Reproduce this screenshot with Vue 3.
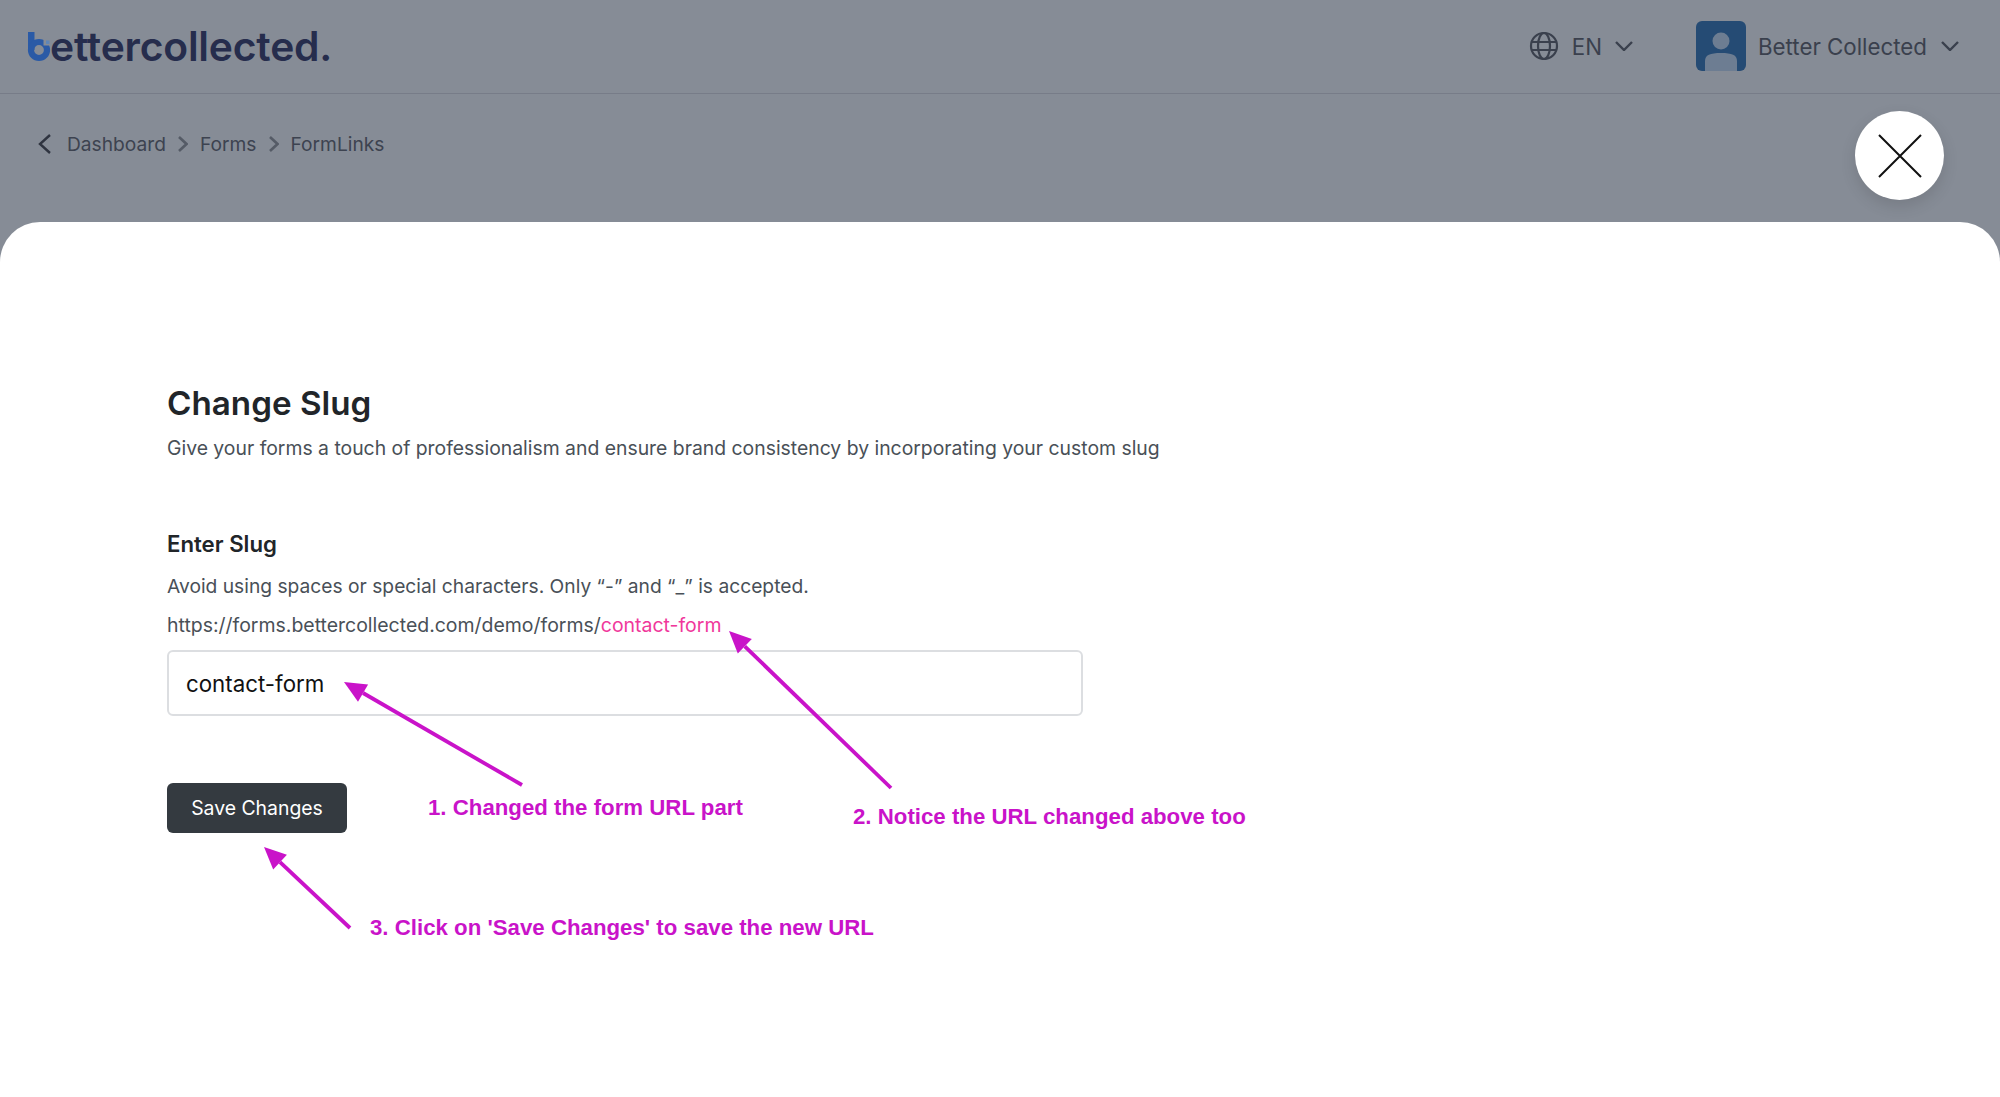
<template>
  <div class="page">
    <header class="topbar">
      <div class="logo">
        <svg class="logo-mark" width="24" height="30" viewBox="0 0 24 30" aria-hidden="true">
          <rect x="1" y="0" width="6.500" height="18" fill="#2a5aa6" />
          <circle cx="12" cy="18" r="8" fill="none" stroke="#2a5aa6" stroke-width="6.200" />
          <rect x="16.500" y="6" width="7.500" height="7.500" fill="#868c96" />
          <rect x="19" y="8.500" width="3.500" height="3.500" fill="#5f86b8" />
        </svg>
        <span class="logo-text">ettercollected.</span>
      </div>
      <div class="top-actions">
        <div class="lang">
          <svg width="30" height="30" viewBox="0 0 30 30" fill="none" stroke="#3a404d" stroke-width="2.200">
            <circle cx="15" cy="15" r="13" />
            <ellipse cx="15" cy="15" rx="6" ry="13" />
            <path d="M2 11H28M2 19H28" />
          </svg>
          <span>EN</span>
          <svg class="chev" width="18" height="10" viewBox="0 0 18 10"><path d="M1 1L9 9L17 1" /></svg>
        </div>
        <div class="user">
          <svg class="avatar" width="50" height="50" viewBox="0 0 50 50">
            <rect width="50" height="50" rx="6" fill="#254b74" />
            <circle cx="25" cy="20" r="8.500" fill="#6d7d92" />
            <path d="M9 50V40C9 34 14 32 25 32S41 34 41 40V50Z" fill="#6d7d92" />
          </svg>
          <span>Better Collected</span>
          <svg class="chev" width="18" height="10" viewBox="0 0 18 10"><path d="M1 1L9 9L17 1" /></svg>
        </div>
      </div>
    </header>

    <nav class="crumbs">
      <svg class="back" width="13" height="20" viewBox="0 0 13 20"><path d="M12 1L2 10L12 19" /></svg>
      <span>Dashboard</span>
      <svg class="sep" width="10" height="16" viewBox="0 0 10 16"><path d="M1 1L8.500 8L1 15" /></svg>
      <span>Forms</span>
      <svg class="sep" width="10" height="16" viewBox="0 0 10 16"><path d="M1 1L8.500 8L1 15" /></svg>
      <span>FormLinks</span>
    </nav>

    <main class="sheet">
      <h1>Change Slug</h1>
      <p class="sub">Give your forms a touch of professionalism and ensure brand consistency by incorporating your custom slug</p>
      <h2>Enter Slug</h2>
      <p class="hint">Avoid using spaces or special characters. Only “-” and “_” is accepted.</p>
      <p class="url">https://forms.bettercollected.com/demo/forms/<span>contact-form</span></p>
      <div class="field">contact-form</div>
      <button class="save" type="button">Save Changes</button>
    </main>

    <button class="close" type="button" aria-label="Close">
      <svg width="44" height="44" viewBox="0 0 44 44"><path d="M1 1L43 43M43 1L1 43" /></svg>
    </button>

    <svg class="arrows" width="2000" height="1097" viewBox="0 0 2000 1097" aria-hidden="true">
      <g v-for="a in arrows" :key="a.id">
        <line :x1="a.x1" :y1="a.y1" :x2="a.sx" :y2="a.sy" />
        <polygon :points="a.head" />
      </g>
    </svg>
    <span class="note n1">1. Changed the form URL part</span>
    <span class="note n2">2. Notice the URL changed above too</span>
    <span class="note n3">3. Click on 'Save Changes' to save the new URL</span>
  </div>
</template>

<script setup>
const raw = [
  { id: 1, x1: 522, y1: 785, x2: 344, y2: 682 },
  { id: 2, x1: 891, y1: 788, x2: 729, y2: 631 },
  { id: 3, x1: 350, y1: 928, x2: 264, y2: 847 }
]
const arrows = raw.map((a) => {
  const dx = a.x1 - a.x2
  const dy = a.y1 - a.y2
  const len = Math.hypot(dx, dy)
  const ux = dx / len
  const uy = dy / len
  const size = 22
  const half = 10
  const bx = a.x2 + ux * size
  const by = a.y2 + uy * size
  const head = [
    [a.x2, a.y2],
    [bx - uy * half, by + ux * half],
    [bx + uy * half, by - ux * half]
  ]
    .map((p) => p.map((n) => n.toFixed(1)).join(','))
    .join(' ')
  return { ...a, sx: bx, sy: by, head }
})
</script>

<style>
html, body { margin: 0; background: #868c96; }
</style>

<style scoped>
.page {
  position: relative;
  width: 2000px;
  height: 1097px;
  overflow: hidden;
  background: #868c96;
  font-family: Inter, "Liberation Sans", sans-serif;
  color: #3a404d;
}
.topbar {
  box-sizing: border-box;
  height: 94px;
  display: flex;
  align-items: center;
  justify-content: space-between;
  padding: 0 41px 0 27px;
  border-bottom: 1px solid #777c88;
}
.logo { display: flex; align-items: flex-end; height: 32px; margin-bottom: 2px; }
.logo-mark { display: block; }
.logo-text {
  font-size: 40.8px;
  font-weight: 600;
  line-height: 32px;
  letter-spacing: -0.2px;
  color: #262d4d;
  margin-left: -1px;
}
.top-actions { display: flex; align-items: center; gap: 63px; margin-bottom: 1px; }
.lang, .user { display: flex; align-items: center; font-size: 22.3px; }
.lang span { margin: 0 13px 0 13px; }
.user span { margin: 0 14px 0 12px; }
.chev path { fill: none; stroke: #3a404d; stroke-width: 2.4; }
.avatar { display: block; }
.crumbs {
  height: 46px;
  margin-top: 27px;
  padding-left: 38px;
  display: flex;
  align-items: center;
  font-size: 19.2px;
  color: #3d4350;
}
.back { margin-right: 16px; }
.back path { fill: none; stroke: #2f3440; stroke-width: 2.4; }
.sep { margin: 0 12px; }
.sep path { fill: none; stroke: #555b66; stroke-width: 2.6; }
.sheet {
  box-sizing: border-box;
  height: 875px;
  margin-top: 55px;
  padding: 157px 0 0 167px;
  background: #fff;
  border-radius: 40px 40px 0 0;
  color: #212529;
}
h1 {
  margin: 0;
  font-size: 33.2px;
  font-weight: 600;
  line-height: 48px;
  color: #212529;
}
.sub {
  margin: 7px 0 0;
  font-size: 19.37px;
  line-height: 28px;
  color: #495057;
}
h2 {
  margin: 66px 0 0;
  font-size: 22.2px;
  font-weight: 600;
  line-height: 32px;
  color: #212529;
}
.hint {
  margin: 12px 0 0;
  font-size: 19.23px;
  line-height: 28px;
  color: #495057;
}
.url {
  margin: 11px 0 0;
  font-size: 19.47px;
  line-height: 28px;
  color: #495057;
}
.url span { color: #f0389b; }
.field {
  box-sizing: border-box;
  width: 916px;
  height: 66px;
  margin-top: 11px;
  padding-left: 17px;
  display: flex;
  align-items: center;
  border: 2px solid #dcdee1;
  border-radius: 6px;
  font-size: 22.3px;
  color: #111;
}
.save {
  display: block;
  width: 180px;
  height: 50px;
  margin-top: 67px;
  padding: 0;
  border: 0;
  border-radius: 6px;
  background: #343a40;
  color: #fff;
  font: 400 19.4px Inter, "Liberation Sans", sans-serif;
}
.close {
  position: absolute;
  left: 1855px;
  top: 111px;
  width: 89px;
  height: 89px;
  padding: 0;
  border: 0;
  border-radius: 50%;
  background: #fff;
  display: flex;
  align-items: center;
  justify-content: center;
  box-shadow: 0 6px 16px rgba(0, 0, 0, 0.12);
}
.close path { fill: none; stroke: #111; stroke-width: 2; }
.arrows { position: absolute; left: 0; top: 0; pointer-events: none; }
.arrows line { stroke: #c913c9; stroke-width: 3.8; }
.arrows polygon { fill: #c913c9; }
.note {
  position: absolute;
  font-family: "Liberation Sans", Arial, sans-serif;
  font-size: 22.25px;
  font-weight: 700;
  line-height: 26px;
  white-space: nowrap;
  color: #c913c9;
}
.n1 { left: 428px; top: 795px; }
.n2 { left: 853px; top: 804px; }
.n3 { left: 370px; top: 915px; }
</style>
